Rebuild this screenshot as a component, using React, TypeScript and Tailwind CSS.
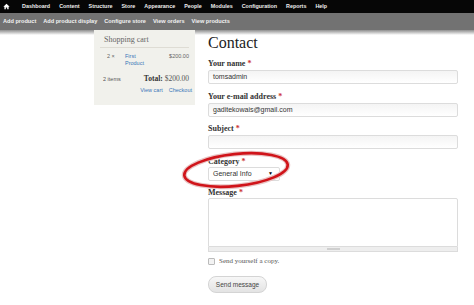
import React from "react";

const topLinks = [
  "Dashboard",
  "Content",
  "Structure",
  "Store",
  "Appearance",
  "People",
  "Modules",
  "Configuration",
  "Reports",
  "Help",
];

const shortcuts = [
  "Add product",
  "Add product display",
  "Configure store",
  "View orders",
  "View products",
];

const sans = "font-['Liberation_Sans',Arial,sans-serif]";
const serif = "font-['Liberation_Serif',Georgia,serif]";

function Label({ text }: { text: string }) {
  return (
    <div className={`${serif} text-[8px] font-bold leading-[10px] text-[#333]`}>
      {text} <span className="text-[#c33]">*</span>
    </div>
  );
}

function Field({ value }: { value?: string }) {
  return (
    <div
      className={`${sans} mt-[1px] flex h-[14px] w-[250px] items-center rounded-[2px] border border-[#dcdcdc] bg-gradient-to-b from-[#f4f4f4] to-white px-[4px] text-[7px] text-[#333]`}
    >
      {value}
    </div>
  );
}

export default function App() {
  return (
    <div className="relative h-[305px] w-[474px] overflow-hidden bg-white">
      {/* admin toolbar */}
      <div className={`${sans} flex h-[13px] items-center gap-[9px] bg-[#060606] pl-[3px] text-[5.4px] font-bold text-[#eee]`}>
        <svg width="7" height="7" viewBox="0 0 10 10" className="mr-[3px]">
          <path d="M5 1 L9.5 5.2 H8 V9 H6 V6.5 H4 V9 H2 V5.2 H0.5 Z" fill="#fff" />
        </svg>
        {topLinks.map((l) => (
          <span key={l}>{l}</span>
        ))}
      </div>
      <div className={`${sans} flex h-[17px] items-center gap-[7px] bg-[#727272] pl-[3px] text-[5.6px] font-bold text-[#f2f2f2]`}>
        {shortcuts.map((s) => (
          <span key={s}>{s}</span>
        ))}
      </div>
      <div className="h-[5px] bg-gradient-to-b from-[#8f8f8f] to-white" />

      <div className="-mt-[5px] flex">
        {/* sidebar */}
        <aside className="ml-[94px] h-[75px] w-[101px] bg-[#f1f1ec] px-[6px] pt-[5px]">
          <div className={`${serif} border-b border-[#dedcd4] pb-[2px] pl-[4px] text-[8px] leading-[10px] text-[#666]`}>
            Shopping cart
          </div>
          <div className={`${sans} mt-[5px] flex text-[5.5px] leading-[7px] text-[#666]`}>
            <span className="ml-[7px] w-[18px]">2 ×</span>
            <span className="w-[40px] text-[#3a77b8]">
              First
              <br />
              Product
            </span>
            <span className="ml-auto">$200.00</span>
          </div>
          <div className="mt-[6px] flex items-baseline text-[#555]">
            <span className={`${sans} ml-[3px] text-[5.5px]`}>2 items</span>
            <span className={`${serif} ml-auto text-[7.5px]`}>
              <b className="text-[#333]">Total:</b> $200.00
            </span>
          </div>
          <div className={`${sans} -mr-[3px] mt-[2px] flex justify-end gap-[6px] text-[5.5px] text-[#3a77b8]`}>
            <span>View cart</span>
            <span>Checkout</span>
          </div>
        </aside>

        {/* contact form */}
        <main className="ml-[13px] w-[252px]">
          <h1 className={`${serif} mt-[5px] text-[16px] leading-[16px] text-[#222]`}>Contact</h1>

          <div className="mt-[8px]">
            <Label text="Your name" />
            <Field value="tomsadmin" />
          </div>
          <div className="mt-[8px]">
            <Label text="Your e-mail address" />
            <Field value="gaditekowais@gmail.com" />
          </div>
          <div className="mt-[7px]">
            <Label text="Subject" />
            <Field />
          </div>
          <div className="relative mt-[8px]">
            <Label text="Category" />
            <div
              className={`${sans} flex h-[14px] w-[72px] items-center justify-between rounded-[2px] border border-[#dcdcdc] bg-white pl-[4px] pr-[6px] text-[7px] text-[#333]`}
            >
              <span>General Info</span>
              <span className="text-[5px] text-black">▼</span>
            </div>
            <svg
              className="pointer-events-none absolute -left-[27px] -top-[8px]"
              width="112"
              height="42"
              viewBox="0 0 112 42"
            >
              <ellipse
                cx="55"
                cy="21"
                rx="52"
                ry="16"
                transform="rotate(-6 55 21)"
                fill="none"
                stroke="#e9c4c4"
                strokeWidth="5"
              />
              <ellipse
                cx="55"
                cy="21"
                rx="52"
                ry="16"
                transform="rotate(-6 55 21)"
                fill="none"
                stroke="#d0141a"
                strokeWidth="2.6"
              />
            </svg>
          </div>
          <div className="mt-[7px]">
            <Label text="Message" />
            <div className="w-[250px]">
              <div className="h-[49px] rounded-t-[2px] border border-[#dcdcdc] bg-white" />
              <div className="flex h-[5px] justify-center border border-t-0 border-[#dcdcdc] bg-[#eeeeee]">
                <div className="mt-[1px] h-[2px] w-[13px] bg-[#cfcfcf]" />
              </div>
            </div>
          </div>
          <div className="mt-[4px] flex items-center gap-[4px]">
            <div className="h-[7px] w-[7px] rounded-[1px] border border-[#bbb] bg-[#f3f3f3]" />
            <span className={`${serif} text-[7px] leading-[10px] text-[#555]`}>Send yourself a copy.</span>
          </div>
          <button
            className={`${sans} mt-[10px] flex h-[17px] w-[59px] items-center justify-center rounded-[8px] border border-[#d4d4d4] bg-gradient-to-b from-[#f7f7f7] to-[#e3e3e3] text-[6.5px] text-[#444]`}
          >
            Send message
          </button>
        </main>
      </div>
    </div>
  );
}
